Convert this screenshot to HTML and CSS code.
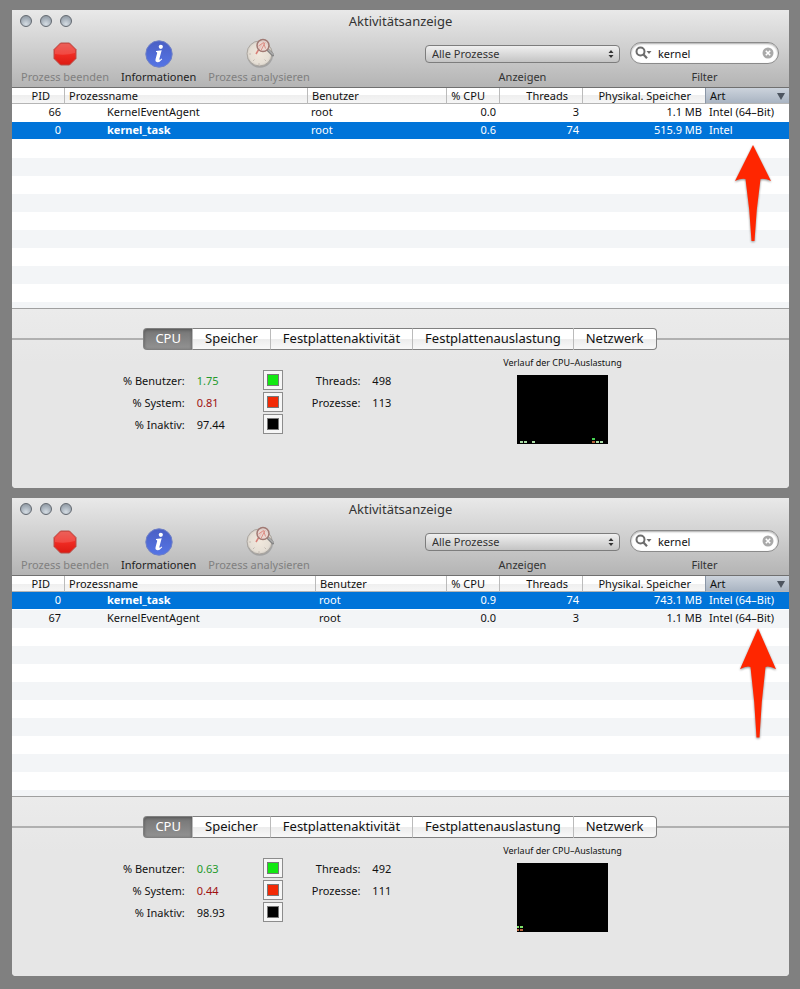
FILE: index.html
```html
<!DOCTYPE html>
<html lang="de">
<head>
<meta charset="utf-8">
<title>Aktivitätsanzeige</title>
<link rel="stylesheet" href="styles.css">
</head>
<body>
<svg class="defs" aria-hidden="true">
  <defs>
    <linearGradient id="stop-fill" x1="0" y1="0" x2="0" y2="1">
      <stop offset="0" stop-color="#e8473f"/>
      <stop offset="0.5" stop-color="#f02c24"/>
      <stop offset="1" stop-color="#dc1a12"/>
    </linearGradient>
    <linearGradient id="info-fill" x1="0" y1="0" x2="0" y2="1">
      <stop offset="0" stop-color="#4a5fc4"/>
      <stop offset="1" stop-color="#5575e6"/>
    </linearGradient>
    <radialGradient id="gauge-fill">
      <stop offset="0" stop-color="#f1e8dc"/>
      <stop offset="0.8" stop-color="#e6dfd5"/>
      <stop offset="1" stop-color="#d5d0c8"/>
    </radialGradient>
    <symbol id="icon-stop" viewBox="0 0 30 30">
      <path d="M10.500 5h9l6.500 6.500v9l-6.500 6.500h-9l-6.500-6.500v-9z" fill="url(#stop-fill)" stroke="#b5504a" stroke-width="1"/>
      <path d="M10.800 6h8.400l5.800 5.800v3.200q-10 3-20 1v-4.200z" fill="#fff" opacity=".14"/>
    </symbol>
    <symbol id="icon-info" viewBox="0 0 30 30">
      <circle cx="15" cy="16" r="13.200" fill="url(#info-fill)" stroke="#6f80c6" stroke-width="1"/>
      <circle cx="16.800" cy="8.800" r="2.100" fill="#fff"/>
      <path d="M12 13.100l5.700-.8-2.300 8.400q-.3 1.500 1 .8l1.200-1 .6.700q-2.600 3.200-5 3-2.300-.3-1.600-3.100l1.600-6q.2-1-1.200-1z" fill="#fff"/>
    </symbol>
    <symbol id="icon-gauge" viewBox="0 0 30 30">
      <ellipse cx="16" cy="17" rx="13" ry="12.800" fill="#666" opacity=".35"/>
      <circle cx="15.500" cy="15.500" r="12.500" fill="url(#gauge-fill)" stroke="#aaa59f" stroke-width="1"/>
      <path d="M5 16h2M9 23l1.500-1.500M15 27v-2M22 23l-1.500-1.500" stroke="#c4bcb3" stroke-width="1"/>
      <path d="M12 16l6-10" stroke="#d98078" stroke-width="1.500"/>
      <path d="M24 12l5 5" stroke="#858585" stroke-width="3" stroke-linecap="round"/>
      <path d="M24 11.500l5 5" stroke="#c9c9c9" stroke-width="1" stroke-linecap="round"/>
      <circle cx="19" cy="7.500" r="6" fill="#ead5cf" fill-opacity=".8" stroke="#a07973" stroke-width="1.500"/>
      <path d="M14.500 8l5-3.500 2 6M17 12.500l4-8" stroke="#dd8f86" stroke-width="1" fill="none"/>
    </symbol>
    <symbol id="icon-search" viewBox="0 0 18 14">
      <circle cx="5.500" cy="5.500" r="4" fill="none" stroke="#6d6d6d" stroke-width="2"/>
      <path d="M8.500 8.500l3.500 3.800" stroke="#6d6d6d" stroke-width="2.200"/>
      <path d="M11.500 5h5l-2.500 3z" fill="#6d6d6d"/>
    </symbol>
    <symbol id="icon-clear" viewBox="0 0 12 12">
      <circle cx="6" cy="6" r="5.500" fill="#a9a9a9"/>
      <path d="M3.800 3.800l4.400 4.400M8.200 3.800l-4.400 4.400" stroke="#fff" stroke-width="1.600"/>
    </symbol>
    <symbol id="icon-updown" viewBox="0 0 6 8">
      <path d="M3 0l2.500 3h-5zM3 8l2.500-3h-5z" fill="#333"/>
    </symbol>
    <symbol id="arrow" viewBox="0 0 40 100" preserveAspectRatio="none">
      <path d="M20 1L38 37q-6-3-10.500-2Q23 66 21.500 97h-3Q17 66 12.500 35 8 34 2 37z" fill="#ff2600"/>
    </symbol>
  </defs>
</svg>

<main class="desktop">
  <section class="window" aria-label="Aktivitätsanzeige">
    <header class="chrome">
      <div class="titlebar">
        <div class="lights">
          <button class="light" type="button" aria-label="Schließen"></button>
          <button class="light" type="button" aria-label="Minimieren"></button>
          <button class="light" type="button" aria-label="Zoomen"></button>
        </div>
        <h1 class="title">Aktivitätsanzeige</h1>
      </div>
      <div class="toolbar">
        <button class="tool" type="button" disabled><svg class="tool-icon"><use href="#icon-stop"/></svg>Prozess beenden</button>
        <button class="tool" type="button"><svg class="tool-icon"><use href="#icon-info"/></svg>Informationen</button>
        <button class="tool" type="button" disabled><svg class="tool-icon"><use href="#icon-gauge"/></svg>Prozess analysieren</button>
        <div class="field field-show">
          <div class="select-wrap">
            <select class="select" id="show-1"><option>Alle Prozesse</option></select>
            <svg class="updown"><use href="#icon-updown"/></svg>
          </div>
          <label class="field-label" for="show-1">Anzeigen</label>
        </div>
        <div class="field field-filter">
          <div class="search">
            <svg class="search-icon"><use href="#icon-search"/></svg>
            <input class="search-input" id="filter-1" type="text" value="kernel">
            <button class="clear" type="button" aria-label="Filter löschen"><svg class="clear-icon"><use href="#icon-clear"/></svg></button>
          </div>
          <label class="field-label" for="filter-1">Filter</label>
        </div>
      </div>
    </header>
    <div class="list">
      <table class="processes">
        <colgroup><col class="col-pid"><col><col class="col-user"><col class="col-cpu"><col class="col-threads"><col class="col-memory"><col class="col-kind"></colgroup>
        <thead>
          <tr><th class="num">PID</th><th>Prozessname</th><th>Benutzer</th><th class="num">% CPU</th><th class="num">Threads</th><th class="num">Physikal. Speicher</th><th class="sorted" aria-sort="descending">Art</th></tr>
        </thead>
        <tbody>
          <tr><td class="num">66</td><td class="name">KernelEventAgent</td><td>root</td><td class="num">0.0</td><td class="num">3</td><td class="num">1.1 MB</td><td>Intel (64–Bit)</td></tr>
          <tr class="selected"><td class="num">0</td><td class="name">kernel_task</td><td>root</td><td class="num">0.6</td><td class="num">74</td><td class="num">515.9 MB</td><td>Intel</td></tr>
        </tbody>
      </table>
    </div>
    <div class="panel">
      <nav class="tabs">
        <button class="tab active" type="button">CPU</button>
        <button class="tab" type="button">Speicher</button>
        <button class="tab" type="button">Festplattenaktivität</button>
        <button class="tab" type="button">Festplattenauslastung</button>
        <button class="tab" type="button">Netzwerk</button>
      </nav>
      <div class="details">
        <dl class="usage">
          <dt>% Benutzer:</dt><dd class="user">1.75</dd><dd class="well"><button class="swatch green" type="button" aria-label="Farbe Benutzer"></button></dd>
          <dt>% System:</dt><dd class="system">0.81</dd><dd class="well"><button class="swatch red" type="button" aria-label="Farbe System"></button></dd>
          <dt>% Inaktiv:</dt><dd>97.44</dd><dd class="well"><button class="swatch black" type="button" aria-label="Farbe Inaktiv"></button></dd>
        </dl>
        <dl class="totals">
          <dt>Threads:</dt><dd>498</dd>
          <dt>Prozesse:</dt><dd>113</dd>
        </dl>
        <figure class="history">
          <figcaption>Verlauf der CPU–Auslastung</figcaption>
          <svg class="graph" viewBox="0 0 91 69" aria-hidden="true">
            <rect width="91" height="69" fill="#000"/>
            <path d="M3 66h3v2h-3zM7 66h3v2h-3zM15 66h3v2h-3zM79 66h3v2h-3zM83 66h3v2h-3z" fill="#a9dca5"/>
            <path d="M75 63h3v2h-3z" fill="#45d052"/>
            <path d="M75 66h3v2h-3z" fill="#b56038"/>
          </svg>
        </figure>
      </div>
    </div>
    <svg class="arrow arrow-first" aria-hidden="true"><use href="#arrow"/></svg>
  </section>

  <section class="window second" aria-label="Aktivitätsanzeige">
    <header class="chrome">
      <div class="titlebar">
        <div class="lights">
          <button class="light" type="button" aria-label="Schließen"></button>
          <button class="light" type="button" aria-label="Minimieren"></button>
          <button class="light" type="button" aria-label="Zoomen"></button>
        </div>
        <h1 class="title">Aktivitätsanzeige</h1>
      </div>
      <div class="toolbar">
        <button class="tool" type="button" disabled><svg class="tool-icon"><use href="#icon-stop"/></svg>Prozess beenden</button>
        <button class="tool" type="button"><svg class="tool-icon"><use href="#icon-info"/></svg>Informationen</button>
        <button class="tool" type="button" disabled><svg class="tool-icon"><use href="#icon-gauge"/></svg>Prozess analysieren</button>
        <div class="field field-show">
          <div class="select-wrap">
            <select class="select" id="show-2"><option>Alle Prozesse</option></select>
            <svg class="updown"><use href="#icon-updown"/></svg>
          </div>
          <label class="field-label" for="show-2">Anzeigen</label>
        </div>
        <div class="field field-filter">
          <div class="search">
            <svg class="search-icon"><use href="#icon-search"/></svg>
            <input class="search-input" id="filter-2" type="text" value="kernel">
            <button class="clear" type="button" aria-label="Filter löschen"><svg class="clear-icon"><use href="#icon-clear"/></svg></button>
          </div>
          <label class="field-label" for="filter-2">Filter</label>
        </div>
      </div>
    </header>
    <div class="list">
      <table class="processes">
        <colgroup><col class="col-pid"><col><col class="col-user"><col class="col-cpu"><col class="col-threads"><col class="col-memory"><col class="col-kind"></colgroup>
        <thead>
          <tr><th class="num">PID</th><th>Prozessname</th><th>Benutzer</th><th class="num">% CPU</th><th class="num">Threads</th><th class="num">Physikal. Speicher</th><th class="sorted" aria-sort="descending">Art</th></tr>
        </thead>
        <tbody>
          <tr class="selected"><td class="num">0</td><td class="name">kernel_task</td><td>root</td><td class="num">0.9</td><td class="num">74</td><td class="num">743.1 MB</td><td>Intel (64–Bit)</td></tr>
          <tr><td class="num">67</td><td class="name">KernelEventAgent</td><td>root</td><td class="num">0.0</td><td class="num">3</td><td class="num">1.1 MB</td><td>Intel (64–Bit)</td></tr>
        </tbody>
      </table>
    </div>
    <div class="panel">
      <nav class="tabs">
        <button class="tab active" type="button">CPU</button>
        <button class="tab" type="button">Speicher</button>
        <button class="tab" type="button">Festplattenaktivität</button>
        <button class="tab" type="button">Festplattenauslastung</button>
        <button class="tab" type="button">Netzwerk</button>
      </nav>
      <div class="details">
        <dl class="usage">
          <dt>% Benutzer:</dt><dd class="user">0.63</dd><dd class="well"><button class="swatch green" type="button" aria-label="Farbe Benutzer"></button></dd>
          <dt>% System:</dt><dd class="system">0.44</dd><dd class="well"><button class="swatch red" type="button" aria-label="Farbe System"></button></dd>
          <dt>% Inaktiv:</dt><dd>98.93</dd><dd class="well"><button class="swatch black" type="button" aria-label="Farbe Inaktiv"></button></dd>
        </dl>
        <dl class="totals">
          <dt>Threads:</dt><dd>492</dd>
          <dt>Prozesse:</dt><dd>111</dd>
        </dl>
        <figure class="history">
          <figcaption>Verlauf der CPU–Auslastung</figcaption>
          <svg class="graph" viewBox="0 0 91 69" aria-hidden="true">
            <rect width="91" height="69" fill="#000"/>
            <path d="M0 63h2v2h-2zM3 63h3v2h-3z" fill="#7ee06a"/>
            <path d="M0 66h2v2h-2zM3 66h3v2h-3z" fill="#b5603c"/>
          </svg>
        </figure>
      </div>
    </div>
    <svg class="arrow arrow-second" aria-hidden="true"><use href="#arrow"/></svg>
  </section>
</main>
</body>
</html>
```
FILE: styles.css
```css
* { box-sizing: border-box; }

body {
  margin: 0;
  background: #808080;
  color: #111;
  font-family: "Noto Sans", "Open Sans", sans-serif;
  font-size: 11px;
}

button, select, input { font: inherit; color: inherit; }
button { padding: 0; border: 0; background: none; }
dl, dd, figure, h1 { margin: 0; }

.defs { position: absolute; width: 0; height: 0; }

.desktop {
  display: flex;
  flex-direction: column;
  gap: 10px;
  padding: 10px 11px 13px 12px;
}

.window {
  position: relative;
  overflow: hidden;
  border-radius: 0 0 4px 4px;
  background: #e6e6e6;
}

.chrome {
  height: 78px;
  background: linear-gradient(#e9e9e9, #cfcfcf 50%, #b4b4b4);
  border-bottom: 1px solid #707070;
}

.titlebar {
  display: grid;
  grid-template-columns: 1fr auto 1fr;
  align-items: center;
  height: 22px;
  padding: 0 8px;
}

.lights { display: flex; gap: 8px; }

.light {
  width: 12px;
  height: 12px;
  border: 1px solid #626870;
  border-radius: 50%;
  background: radial-gradient(circle at 50% 80%, #d5dde4, #a3adb7 60%, #88919a);
}

.title {
  color: #333;
  font-size: 13px;
  font-weight: 400;
  line-height: 22px;
}

.toolbar {
  display: flex;
  padding: 6px 10px 0 9px;
}

.tool {
  display: flex;
  flex-direction: column;
  align-items: center;
  margin-right: 12px;
  color: #222;
  line-height: 16px;
  white-space: nowrap;
}

.tool:disabled { color: #808080; }
.tool-icon { width: 30px; height: 30px; margin-bottom: 1px; }

.field {
  display: flex;
  flex-direction: column;
  align-items: center;
  height: 47px;
  justify-content: space-between;
}

.field-label { color: #333; line-height: 16px; }
.field-show { width: 195px; margin-left: auto; padding-top: 7px; }
.field-filter { width: 149px; margin-left: 10px; padding-top: 4px; }

.select-wrap { position: relative; width: 100%; }

.select {
  display: block;
  width: 100%;
  height: 18px;
  padding: 0 6px;
  appearance: none;
  border: 1px solid #7d7d7d;
  border-radius: 4px;
  background: linear-gradient(#f0f0f0, #c4c4c4);
  color: #333;
  line-height: 16px;
}

.updown { position: absolute; top: 5px; right: 6px; width: 6px; height: 8px; }

.search {
  display: flex;
  align-items: center;
  width: 100%;
  height: 22px;
  padding: 0 4px;
  border: 1px solid #8a8a8a;
  border-radius: 11px;
  background: #fff;
  box-shadow: inset 0 1px 2px #aaa;
}

.search-icon { flex: none; width: 18px; height: 14px; }

.search-input {
  flex: 1;
  min-width: 0;
  padding: 0 5px;
  border: 0;
  outline: 0;
  background: none;
}

.clear, .clear-icon { display: block; width: 12px; height: 12px; }

.list {
  height: 221px;
  border-bottom: 1px solid #a0a0a0;
  background: repeating-linear-gradient(#fff 0 18px, #f3f5f7 18px 36px) 0 16px;
}

.processes {
  width: 100%;
  table-layout: fixed;
  border-collapse: separate;
  border-spacing: 0;
}

.col-pid { width: 52px; }
.col-user { width: 139px; }
.second .col-user { width: 131px; }
.col-cpu { width: 53px; }
.col-threads { width: 83px; }
.col-memory { width: 123px; }
.col-kind { width: 84px; }

th, td {
  overflow: hidden;
  padding: 0 3px 0 4px;
  text-align: left;
  white-space: nowrap;
}

th {
  height: 16px;
  padding-right: 14px;
  border-bottom: 1px solid #b5b5b5;
  border-left: 1px solid #bbb;
  background: linear-gradient(#fff 50%, #efefef 50%, #f6f6f6);
  font-weight: 400;
  line-height: 15px;
}

th:first-child { border-left: 0; }

td { height: 18px; padding-bottom: 2px; line-height: 16px; }
.num { text-align: right; }
.name { padding-left: 43px; }

.sorted {
  position: relative;
  border-left-color: #8a96a6;
  background: linear-gradient(#ccd3dc, #a9b4c2);
}

.sorted::after {
  position: absolute;
  top: 5px;
  right: 4px;
  border: 4px solid transparent;
  border-top: 7px solid #4d5560;
  border-bottom: 0;
  content: "";
}

.selected {
  background: linear-gradient(#0074d9 17px, #fff 17px);
  color: #fff;
}

.selected .name { font-weight: 700; }

.panel {
  height: 179px;
  padding-top: 19px;
  background: linear-gradient(#ebebeb, #e6e6e6 30%);
}

.tabs {
  display: flex;
  align-items: center;
}

.tabs::before, .tabs::after {
  height: 2px;
  background: #b0b0b0;
  content: "";
}

.tabs::before { flex: 131; }
.tabs::after { flex: 132; }

.tab {
  height: 22px;
  padding: 0 12px 2px;
  border: solid #808080;
  border-width: 1px 0;
  background: linear-gradient(#fff 50%, #ececec 50%, #f8f8f8);
  color: #111;
  font-size: 13px;
  line-height: 18px;
  white-space: nowrap;
}

.tab + .tab { border-left: 1px solid #bbb; }

.tab.active {
  padding: 0 11px 2px;
  border-left-width: 1px;
  border-radius: 4px 0 0 4px;
  background: linear-gradient(#757575, #929292);
  box-shadow: inset 0 1px 3px #555;
  color: #fff;
}

.tab:last-child { border-right: 1px solid #808080; border-radius: 0 4px 4px 0; }

.details {
  display: flex;
  align-items: flex-start;
  padding-left: 14%;
}

.usage, .totals {
  display: grid;
  grid-auto-rows: 22px;
  align-items: center;
  padding-top: 19px;
}

.usage { grid-template-columns: 64px 66px 20px; column-gap: 12px; }
.usage dd.well { margin-left: -12px; }
.totals { grid-template-columns: auto auto; column-gap: 12px; margin-left: 17px; }
dt { text-align: right; }

.user { color: #249a2c; }
.system { color: #9e1010; }

.swatch {
  display: block;
  width: 20px;
  height: 20px;
  border: 1px solid #8c8c8c;
  background: #f6f6f6;
}

.swatch::before {
  display: block;
  width: 10px;
  height: 10px;
  margin: auto;
  border: 1px solid #777;
  background: currentColor;
  content: "";
}

.green { color: #11e811; }
.red { color: #f22a05; }
.black { color: #000; }

.history { margin-left: 112px; text-align: center; }
.history figcaption { padding-top: 4px; font-size: 9px; line-height: 18px; }
.graph { display: block; width: 91px; height: 69px; margin: 3px auto 0; }

.arrow {
  position: absolute;
  width: 40px;
  height: 100px;
  filter: drop-shadow(0 1px 1px #888);
}

.arrow-first { top: 134px; right: 16px; }
.arrow-second { top: 129px; right: 11px; height: 114px; }
```
